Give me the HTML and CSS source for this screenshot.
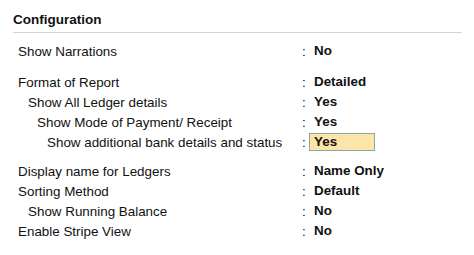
FILE: index.html
```html
<!DOCTYPE html>
<html lang="en">
<head>
    <meta charset="UTF-8">
    <title>Configuration</title>
    <link rel="stylesheet" href="styles.css">
</head>
<body>
<div class="panel">
    <h1 class="panel-title">Configuration</h1>

    <div class="group">
        <div class="row"><span class="label">Show Narrations</span><span class="colon">:</span><span class="value">No</span></div>
    </div>

    <div class="group">
        <div class="row"><span class="label">Format of Report</span><span class="colon">:</span><span class="value">Detailed</span></div>
        <div class="row"><span class="label indent-1">Show All Ledger details</span><span class="colon">:</span><span class="value">Yes</span></div>
        <div class="row"><span class="label indent-2">Show Mode of Payment/ Receipt</span><span class="colon">:</span><span class="value">Yes</span></div>
        <div class="row"><span class="label indent-3">Show additional bank details and status</span><span class="colon">:</span><span class="value active">Yes</span></div>
    </div>

    <div class="group">
        <div class="row"><span class="label">Display name for Ledgers</span><span class="colon">:</span><span class="value">Name Only</span></div>
        <div class="row"><span class="label">Sorting Method</span><span class="colon">:</span><span class="value">Default</span></div>
        <div class="row"><span class="label indent-1">Show Running Balance</span><span class="colon">:</span><span class="value">No</span></div>
        <div class="row"><span class="label">Enable Stripe View</span><span class="colon">:</span><span class="value">No</span></div>
    </div>
</div>
</body>
</html>
```

FILE: styles.css
```css
body {
    margin: 0;
    font-family: 'Liberation Sans', Arial, sans-serif;
    color: #111;
    background-color: #fff;
}

.panel {
    padding: 0 12px 0 13px;
}

.panel-title {
    margin: 0;
    padding: 10px 0 2px;
    font-size: 13.5px;
    line-height: 20px;
    font-weight: bold;
    border-bottom: 1px solid #d4d4d4;
}

.group {
    margin-top: 11px;
}

.group:first-of-type {
    margin-top: 8px;
}

.group:last-child {
    margin-top: 9px;
}

.row {
    display: flex;
    align-items: center;
    height: 20px;
    font-size: 13.4px;
}

.label {
    width: 287px;
    padding-left: 5px;
    box-sizing: border-box;
}

.indent-1 { padding-left: 15px; }
.indent-2 { padding-left: 24px; }
.indent-3 { padding-left: 34px; }

.colon {
    width: 9px;
    padding-left: 2px;
    box-sizing: border-box;
}

.value {
    width: 66px;
    height: 18px;
    line-height: 16px;
    padding-left: 4px;
    box-sizing: border-box;
    border: 1px solid transparent;
    font-weight: bold;
    white-space: nowrap;
}

.value.active {
    background-color: #fde4a8;
    border-color: #86a9a8;
}
```
